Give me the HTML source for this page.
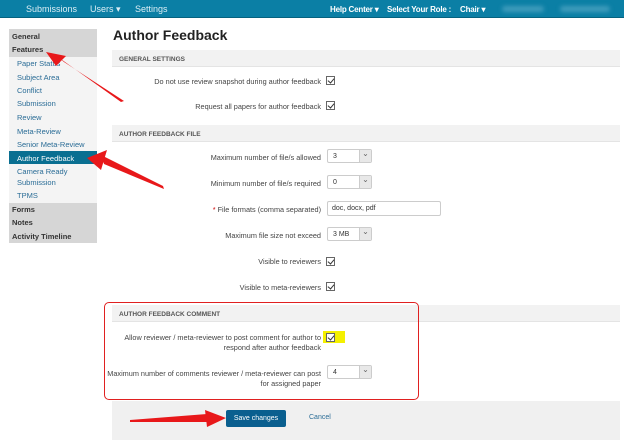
<!DOCTYPE html><html><head><style>
*{margin:0;padding:0;box-sizing:border-box}
body{width:624px;height:440px;overflow:hidden;background:#fff;font-family:"Liberation Sans",sans-serif;position:relative;color:#333}
.a{position:absolute;white-space:nowrap}
.top{left:0;top:0;width:624px;height:18px;background:#0b7fa5;border-bottom:1px solid #06627f}
.nav{font-size:9px;color:#dbeef5;top:4px}
.navb{font-size:8px;color:#fff;font-weight:bold;top:5px;letter-spacing:-0.2px}
.sb{font-size:7.5px;font-weight:bold;color:#333}
.sl{font-size:7.5px;color:#2a6c96;left:17px}
.hdr{left:112px;width:508px;height:17px;background:#f2f2f2;border-bottom:1px solid #e4e4e4;font-size:6.5px;font-weight:bold;color:#555;padding:6px 0 0 7px}
.lb{font-size:7.3px;color:#444;text-align:right;right:303px}
.cb{width:9px;height:9px;border:1px solid #666;background:#fff;left:326px}
.cb:after{content:"";position:absolute;left:2px;top:0px;width:3px;height:5px;border:solid #333;border-width:0 1px 1px 0;transform:rotate(40deg)}
.sel{left:327px;width:45px;height:14px;border:1px solid #ccc;border-radius:2px;font-size:7px;padding:3px 0 0 5px;background:#fff}
.sel:after{content:"⌄";position:absolute;right:0;top:0;width:11px;height:12px;background:#e8e8e8;border-left:1px solid #ccc;font-size:8px;text-align:center;line-height:8px;color:#666}
</style></head><body>
<div class="a top"></div>
<div class="a nav" style="left:26px">Submissions</div>
<div class="a nav" style="left:90px">Users ▾</div>
<div class="a nav" style="left:135px">Settings</div>
<div class="a navb" style="left:330px">Help Center ▾</div>
<div class="a navb" style="left:387px">Select Your Role :</div>
<div class="a navb" style="left:460px">Chair ▾</div>
<div class="a" style="left:502px;top:6px;width:42px;height:6px;background:#3f9cbc;border-radius:3px;filter:blur(2px)"></div>
<div class="a" style="left:560px;top:6px;width:50px;height:6px;background:#3f9cbc;border-radius:3px;filter:blur(2px)"></div>

<div class="a" style="left:9px;top:29px;width:88px;height:214px;background:#d6d6d6"></div>
<div class="a" style="left:9px;top:57px;width:88px;height:146px;background:#f4f4f4"></div>
<div class="a" style="left:9px;top:151px;width:88px;height:13px;background:#0a6f91"></div>
<div class="a sb" style="left:12px;top:32px">General</div>
<div class="a sb" style="left:12px;top:45px">Features</div>
<div class="a sl" style="top:59px">Paper Status</div>
<div class="a sl" style="top:73px">Subject Area</div>
<div class="a sl" style="top:86px">Conflict</div>
<div class="a sl" style="top:99px">Submission</div>
<div class="a sl" style="top:113px">Review</div>
<div class="a sl" style="top:127px">Meta-Review</div>
<div class="a sl" style="top:140px">Senior Meta-Review</div>
<div class="a sl" style="top:154px;color:#fff">Author Feedback</div>
<div class="a sl" style="top:167px">Camera Ready</div>
<div class="a sl" style="top:178px">Submission</div>
<div class="a sl" style="top:191px">TPMS</div>
<div class="a sb" style="left:12px;top:205px">Forms</div>
<div class="a sb" style="left:12px;top:218px">Notes</div>
<div class="a sb" style="left:12px;top:232px">Activity Timeline</div>

<div class="a" style="left:113px;top:27px;font-size:14px;font-weight:bold;color:#222">Author Feedback</div>

<div class="a hdr" style="top:50px">GENERAL SETTINGS</div>
<div class="a lb" style="top:77px">Do not use review snapshot during author feedback</div><div class="a cb" style="top:76px"></div>
<div class="a lb" style="top:102px">Request all papers for author feedback</div><div class="a cb" style="top:101px"></div>

<div class="a hdr" style="top:125px">AUTHOR FEEDBACK FILE</div>
<div class="a lb" style="top:153px">Maximum number of file/s allowed</div><div class="a sel" style="top:149px">3</div>
<div class="a lb" style="top:179px">Minimum number of file/s required</div><div class="a sel" style="top:175px">0</div>
<div class="a lb" style="top:205px"><span style="color:#c00">*</span> File formats (comma separated)</div>
<div class="a" style="left:327px;top:201px;width:114px;height:15px;border:1px solid #ccc;border-radius:2px;font-size:7px;padding:3px 0 0 4px">doc, docx, pdf</div>
<div class="a lb" style="top:231px">Maximum file size not exceed</div><div class="a sel" style="top:227px">3 MB</div>
<div class="a lb" style="top:257px">Visible to reviewers</div><div class="a cb" style="top:257px"></div>
<div class="a lb" style="top:283px">Visible to meta-reviewers</div><div class="a cb" style="top:282px"></div>

<div class="a hdr" style="top:305px">AUTHOR FEEDBACK COMMENT</div>
<div class="a lb" style="top:333px;line-height:10px">Allow reviewer / meta-reviewer to post comment for author to<br>respond after author feedback</div>
<div class="a" style="left:323px;top:331px;width:22px;height:12px;background:#f4f000"></div><div class="a cb" style="top:333px"></div>
<div class="a lb" style="top:369px;line-height:10px">Maximum number of comments reviewer / meta-reviewer can post<br>for assigned paper</div>
<div class="a sel" style="top:365px">4</div>
<div class="a" style="left:104px;top:302px;width:315px;height:98px;border:1.5px solid #e02020;border-radius:5px"></div>

<div class="a" style="left:112px;top:401px;width:508px;height:39px;background:#f0f0f0"></div>
<div class="a" style="left:226px;top:410px;width:60px;height:17px;background:#0a5f8f;border-radius:2px;color:#fff;font-size:7px;text-align:center;line-height:17px">Save changes</div>
<div class="a" style="left:309px;top:414px;font-size:7px;color:#2a6c96">Cancel</div>

<svg class="a" style="left:0;top:0" width="624" height="440">
<g fill="#e8181a">
<polygon points="46,52 66,56 56,66"/><polygon points="58,57 64,62 124,101 121,102"/>
<polygon points="87,158 107,150 101,170"/><polygon points="101,155 104,164 164,189 163,186"/>
<polygon points="226,418 205,410 207,427"/><polygon points="130,420 207,414 207,422 130,422"/>
</g></svg>
</body></html>
